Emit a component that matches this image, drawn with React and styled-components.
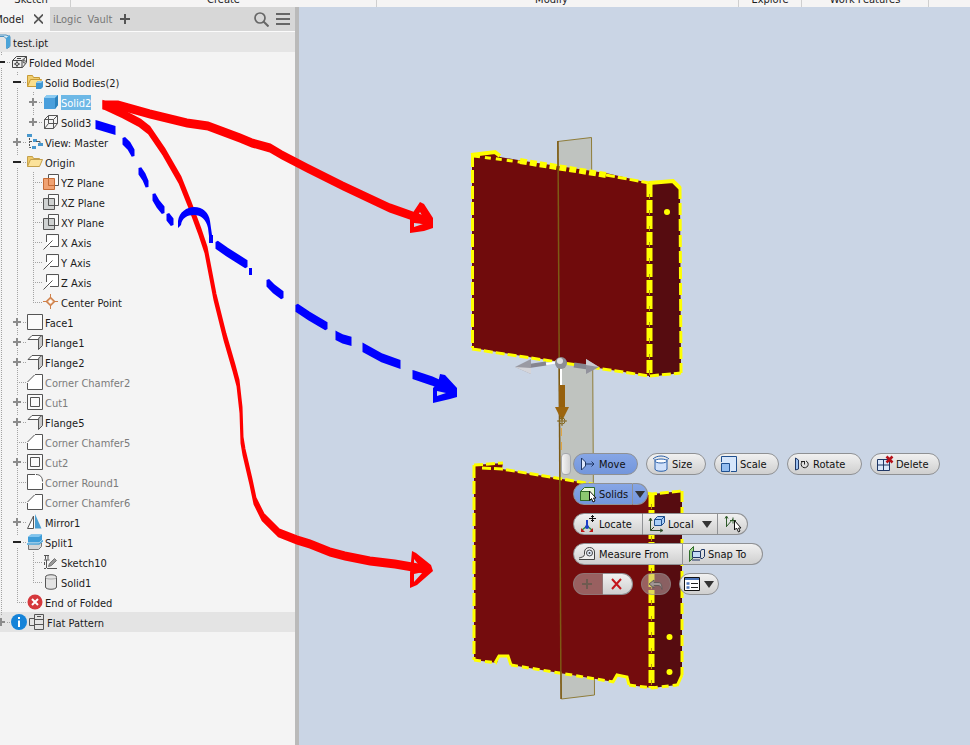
import React from 'react';
import styled, { createGlobalStyle, css } from 'styled-components';

const GlobalStyle = createGlobalStyle`
    * {
        box-sizing: border-box;
    }
    body {
        margin: 0;
        background: #cad5e5;
        font-family: "DejaVu Sans Condensed", "DejaVu Sans", Tahoma, sans-serif;
        font-size: 11px;
        color: #1c1c1c;
    }
    button {
        font: inherit;
        color: inherit;
        padding: 0;
        border: 0;
        background: none;
    }
    svg {
        display: block;
        flex: none;
    }
`

const Page = styled.div`
    position: relative;
    display: flex;
    flex-direction: column;
    min-height: 100vh;
    overflow: hidden;
`

/* ---------- ribbon ---------- */

const Ribbon = styled.header`
    display: grid;
    grid-template-columns: 71fr 306fr 362fr 63fr 127fr 41fr;
    grid-template-rows: 7px;
    align-items: end;
    background: #f5f4f4;
    overflow: hidden;
`

const RibbonGroup = styled.div`
    min-width: 0;
    line-height: 14px;
    height: 14px;
    text-align: center;
    border-right: 1px solid #cfcfcf;
    padding-right: ${p => p.$inset || 0}px;
    white-space: nowrap;
    &:last-child {
        border-right: 0;
    }
`

/* ---------- browser panel ---------- */

const Workspace = styled.div`
    display: flex;
    flex: 1;
`

const Panel = styled.aside`
    flex: none;
    width: 299px;
    border-right: 4px solid #bababa;
    background: #f4f4f4;
    overflow: hidden;
`

const TabBar = styled.div`
    display: flex;
    align-items: stretch;
    height: 24px;
    background: #d7d7d7;
    padding-right: 5px;
`

const ModelTab = styled.div`
    display: flex;
    align-items: center;
    justify-content: flex-end;
    gap: 10px;
    width: 50px;
    padding-right: 7px;
    background: #f4f4f4;
`

const Tab = styled.button`
    margin: 0 3px;
    color: #777;
`

const IconButton = styled.button`
    display: flex;
    align-items: center;
`

const TabTools = styled.div`
    display: flex;
    gap: 7px;
    margin-left: auto;
`

const FileRow = styled.div`
    display: flex;
    align-items: center;
    height: 21px;
    margin-left: -5px;
    border-top: 1px solid #fbfbfb;
    background: #e5e5e5;
`

const Tree = styled.ul`
    list-style: none;
    margin: 0;
    padding: 0;
`

const TreeRow = styled.li`
    display: flex;
    align-items: center;
    height: 20px;
    padding-right: 4px;
    background: ${p => (p.$shaded ? '#e4e4e4' : 'transparent')};
`

const TreeInner = styled.div`
    display: flex;
    align-items: center;
    height: 20px;
    margin-left: -5px;
`

const dots = dir => `repeating-linear-gradient(${dir}, #a3a3a3 0 1px, transparent 1px 2px)`

const guides = {
    line: css`
        background: ${dots('to bottom')} 6px 0 / 1px 20px no-repeat;
    `,
    tee: css`
        background:
            ${dots('to bottom')} 6px 0 / 1px 20px no-repeat,
            ${dots('to right')} 6px 10px / 10px 1px no-repeat;
    `,
    end: css`
        background:
            ${dots('to bottom')} 6px 0 / 1px 10px no-repeat,
            ${dots('to right')} 6px 10px / 10px 1px no-repeat;
    `,
}

const Guide = styled.span`
    display: flex;
    align-items: center;
    flex: none;
    width: 16px;
    height: 20px;
    ${p => guides[p.$kind]}
`

const Expander = styled.button`
    width: 12px;
    height: 12px;
    background:
        linear-gradient(${p => (p.$open ? '#222, #222' : '#8b8b8b, #8b8b8b')}) 2px 5px / 8px 2px no-repeat,
        linear-gradient(${p => (p.$open ? 'transparent, transparent' : '#8b8b8b, #8b8b8b')}) 5px 2px / 2px 8px no-repeat,
        ${p => (p.$shaded ? '#e4e4e4' : '#f4f4f4')};
`

const Label = styled.span`
    margin-left: 2px;
    padding-top: 2px;
    line-height: 13px;
    white-space: nowrap;
    color: ${p => (p.$muted ? '#7b7b7b' : '#1c1c1c')};
    ${p => p.$selected && css`
        background: #6db8e6;
        color: #fff;
    `}
`

/* ---------- viewport ---------- */

const Viewport = styled.main`
    position: relative;
    flex: 1;
    overflow: hidden;
    background: #cad5e5;
`

const MiniToolbar = styled.div`
    position: absolute;
    left: 262px;
    top: 446px;
    display: flex;
    align-items: flex-start;
    gap: 2px;
`

const Grip = styled.div`
    width: 10px;
    height: 22px;
    border: 1px solid #a5a8ad;
    border-radius: 4px;
    background: linear-gradient(90deg, #f4f4f4, #d2d2d2);
`

const ToolRows = styled.div`
    display: flex;
    flex-direction: column;
    gap: 8px;
`

const ToolRow = styled.div`
    display: flex;
    gap: 8px;
`

const ToolGroup = styled.div`
    display: flex;
    & > button:not(:first-child) {
        border-left: 0;
        border-top-left-radius: 0;
        border-bottom-left-radius: 0;
    }
    & > button:not(:last-child) {
        border-top-right-radius: 0;
        border-bottom-right-radius: 0;
    }
`

const fills = {
    plain: 'linear-gradient(#f1f1f1, #dedede 55%, #cfcfcf)',
    active: 'linear-gradient(#86a6e6, #7396dc)',
    faded: 'rgba(190, 180, 180, 0.5)',
}

const ToolButton = styled.button`
    display: flex;
    align-items: center;
    gap: 2px;
    width: ${p => p.$width}px;
    height: 22px;
    padding-left: ${p => (p.$center ? 0 : 5)}px;
    justify-content: ${p => (p.$center ? 'center' : 'flex-start')};
    border: 1px solid ${p => (p.$look === 'faded' ? 'rgba(140, 130, 130, 0.6)' : '#8f9194')};
    border-radius: 11px;
    background: ${p => fills[p.$look || 'plain']};
    color: #111;
    white-space: nowrap;
`

const Caret = styled.span`
    border: 5px solid transparent;
    border-top: 7px solid #333;
    border-bottom: 0;
    margin-left: ${p => p.$gap || 0}px;
`

const Markup = styled.svg`
    position: absolute;
    left: 0;
    top: 0;
    pointer-events: none;
`

/* ---------- icons ---------- */

const Svg = ({ size = 16, children }) => (
    <svg width={size} height={size} viewBox={`0 0 ${size} ${size}`} fill="none" aria-hidden="true">{children}</svg>
)

const PlaneIcon = ({ fill, stroke }) => (
    <Svg>
        <path d="M5.500.5h10v11h-10z" fill="#fbfbfb" stroke="#555" />
        <path d="M.5 4.500h11v11H.5z" fill={fill} stroke={stroke} />
        <path d="M5.500 4.500v7h6" stroke={stroke} />
    </Svg>
)

const icons = {
    part: (
        <Svg>
            <path d="M0 2.500h9l3 3v9l3-2v-10l-4-1.500H2z" fill="#d8edf8" stroke="#4a90bf" />
            <path d="M11 4l4-3v11l-4 3z" fill="#4aa3d8" />
        </Svg>
    ),
    folded: (
        <Svg>
            <path d="M1.500 6.500l4-4h10v6l-4 5h-10z" fill="#eee" stroke="#444" />
            <path d="M1.500 6.500h9.500v7M11 6.500l4.500-4" stroke="#444" />
            <circle cx="6" cy="10" r="1.500" stroke="#444" />
            <path d="M6 7v2M6 11v2M3 10h1.500M7.500 10H9" stroke="#444" />
            <ellipse cx="13.200" cy="7.500" rx="1" ry="1.600" stroke="#444" />
            <path d="M6 4.500h4" stroke="#444" />
        </Svg>
    ),
    bodies: (
        <Svg>
            <path d="M.5 12.500V1.500h5l1 2h6v2" fill="#f0cf70" stroke="#c79a35" />
            <path d="M.5 12.500l3-7h11l-3 7z" fill="#fadf8e" stroke="#c79a35" />
            <path d="M9 9l2-2h5v6l-2 2H9z" fill="#3f97d3" />
            <path d="M9 9l2-2h5l-2 2z" fill="#8cc8ee" />
        </Svg>
    ),
    solid: (
        <Svg>
            <path d="M1 4l3-3h11v10l-3 4H1z" fill="#4a9fdc" />
            <path d="M1 4l3-3h11l-3 3z" fill="#8bcbf2" />
            <path d="M12 4l3-3v10l-3 4z" fill="#2b82bd" />
        </Svg>
    ),
    wire: (
        <Svg>
            <path d="M1.500 5.500l4-4h9v8l-4 5h-9zM1.500 5.500h9v9M10.500 5.500l4-4M5.500 1.500v8h9M5.500 9.500l-4 5" stroke="#555" />
        </Svg>
    ),
    view: (
        <Svg>
            <path d="M2.500 4v9.500H6M3 7.500h4" stroke="#555" strokeDasharray="2 1" />
            <path d="M0 0h5v3H0zM6 5h4v3H6zM11 9h5v3h-5zM5 12h4v3H5z" fill="#4797cd" />
            <path d="M9 7.500h4V9" stroke="#555" />
        </Svg>
    ),
    folder: (
        <Svg>
            <path d="M.5 12.500V2.500h5l1 2h6v2" fill="#efcb6a" stroke="#c4a04c" />
            <path d="M.5 12.500l3-7h12l-3 7z" fill="#fbe29a" stroke="#c4a04c" />
        </Svg>
    ),
    planeYZ: <PlaneIcon fill="#f0a272" stroke="#c56b35" />,
    plane: <PlaneIcon fill="#cfd2d2" stroke="#555" />,
    axis: (
        <Svg>
            <path d="M3.500 1.500h12v11h-12z" fill="#fff" />
            <path d="M3.500 8V.5h12v12H7M.5 15.500l9-9" stroke="#555" />
        </Svg>
    ),
    center: (
        <Svg>
            <path d="M7.500 0v15M0 7.500h15" stroke="#cf8049" />
            <path d="M7.500 3.500l4 4-4 4-4-4z" fill="#f4d5bd" stroke="#cf8049" strokeWidth="1.500" />
            <circle cx="7.500" cy="7.500" r="1.500" fill="#fff" />
        </Svg>
    ),
    face: <Svg><path d="M.5.5h15v15H.5z" fill="#fafafa" stroke="#555" /></Svg>,
    flange: (
        <Svg>
            <path d="M1 5.500L5 1.500h10l-4 4z" fill="#fff" stroke="#555" />
            <path d="M11.500 6c0-2.500 1.500-4 4-4.500v10l-4 4z" fill="#c9c9c9" stroke="#555" />
        </Svg>
    ),
    chamfer: (
        <Svg>
            <path d="M.5 15.500v-7l8-8h7v15z" fill="#fff" />
            <path d="M.5 9v6.500h15V.5H8M.5 8l7-7" stroke="#555" />
        </Svg>
    ),
    round: (
        <Svg>
            <path d="M.5.5H9c4 0 6.500 3 6.500 7v8H.5z" fill="#fff" />
            <path d="M8 .5H.5v15h15V9M9 .5c4 0 6.500 2.500 6.500 7" stroke="#555" />
        </Svg>
    ),
    cut: <Svg><path d="M.5.5h15v15H.5zM3.500 3.500h9v9h-9z" fill="#fbfbfb" stroke="#555" /></Svg>,
    mirror: (
        <Svg>
            <path d="M6.500 2v12.500h-6z" fill="#fff" stroke="#555" />
            <path d="M8 0l6.500 14.500H8z" fill="#4a9fd3" />
        </Svg>
    ),
    split: (
        <Svg>
            <path d="M1.500 11v4.500h10l3-3V9" fill="#d6d6d6" stroke="#777" />
            <path d="M1 3l3-2.500h11V6l-3 2.500H1z" fill="#3f9dd8" />
            <path d="M1 3l3-2.500h11L12 3z" fill="#7fc4ee" />
            <path d="M0 10h12l4-3.500" stroke="#4aa3d8" strokeWidth="1.500" />
        </Svg>
    ),
    sketch: (
        <Svg>
            <path d="M1 1.500h5M2.500 2v3.500M5 2v3.500M1 6h5.500M3.500 6v8M1.500 8v3" stroke="#555" />
            <path d="M1 14.500h14" stroke="#555" strokeDasharray="2 1 10 1" />
            <path d="M5.500 12.500l1-3 5-5 2 2-5 5z" fill="#999" stroke="#777" />
        </Svg>
    ),
    cylinder: (
        <Svg>
            <path d="M2.500 3v10c0 3 11 3 11 0V3c0-3-11-3-11 0z" fill="#e3e3e3" stroke="#555" />
            <path d="M2.500 3.500c0 2 11 2 11 0" stroke="#aaa" />
        </Svg>
    ),
    endFolded: (
        <Svg>
            <circle cx="8" cy="8" r="7.500" fill="#d5383c" />
            <path d="M5 5l6 6M11 5l-6 6" stroke="#fff" strokeWidth="2" />
        </Svg>
    ),
    info: (
        <Svg>
            <circle cx="8" cy="8" r="8" fill="#1583d8" />
            <path d="M8 3v2M8 6.500V13" stroke="#fff" strokeWidth="2" />
        </Svg>
    ),
    flat: (
        <Svg>
            <path d="M5.500.5h9v15h-9zM5.500 5.500h9M5.500 10.500h9M5.500 4.500h-5v7h5M8 2.500h4" stroke="#555" />
        </Svg>
    ),
}

const toolIcons = {
    move: (
        <Svg size={18}>
            <path d="M2.500 3v12l4-4V7z" fill="#dfe8fb" stroke="#1f3765" />
            <path d="M6 9h9M12.500 6.500L15 9l-2.500 2.500" stroke="#1f3765" />
        </Svg>
    ),
    size: (
        <Svg size={18}>
            <path d="M3 4v10c0 3 12 3 12 0V4" fill="#cfe0fa" stroke="#2a5fa8" />
            <ellipse cx="9" cy="6" rx="6" ry="2" fill="#fff" stroke="#2a5fa8" />
            <path d="M1 4c4-4 12-4 16 0" stroke="#2a5fa8" />
        </Svg>
    ),
    scale: (
        <Svg size={18}>
            <path d="M1.500 7V1.500h15v15H11" stroke="#1f4f8f" fill="#d6e6fb" />
            <path d="M1.500 8.500h8v8h-8z" fill="#93bdf0" stroke="#1f4f8f" />
        </Svg>
    ),
    rotate: (
        <Svg size={18}>
            <path d="M2.500 3l3 2v9l-3 1z" fill="#9cc0f0" stroke="#1f3765" />
            <path d="M8 6.500h4M11.500 6v3.500M9 7a3.500 3.500 0 1 0 4-1" stroke="#222" />
        </Svg>
    ),
    delete: (
        <Svg size={18}>
            <path d="M1.500 4.500h12v11h-12zM7.500 4.500v11M1.500 10h12" fill="#dbe8fb" stroke="#1f3765" />
            <path d="M10.500 1.500l6 6M16.500 1.500l-6 6" stroke="#b5121b" strokeWidth="2.500" />
        </Svg>
    ),
    solids: (
        <Svg size={18}>
            <path d="M1.500 6.500l4-4h10v9l-4 4h-10z" fill="#e8f6d8" stroke="#2f6b2a" />
            <path d="M1.500 6.500h9v9h-9z" fill="#8cc871" stroke="#2f6b2a" />
            <path d="M10.500 6v9.500l2-2 1.500 3.500 2-1-1.500-3h2.500z" fill="#fff" stroke="#111" />
        </Svg>
    ),
    locate: (
        <Svg size={18}>
            <path d="M13.500 0v7M10 3.500h7M12 1.500h3M12 5.500h3" stroke="#111" />
            <path d="M8 5v7" stroke="#1c3fc7" strokeWidth="2" />
            <path d="M8 11l-5 4M8 11l5 4" stroke="#2c8a3b" strokeWidth="1.500" />
            <path d="M2 13v4h4zM14 13v4h-4z" fill="#c01818" />
            <circle cx="8" cy="12" r="2" fill="#1c3fc7" />
        </Svg>
    ),
    local: (
        <Svg size={18}>
            <path d="M2.500 4v11.500H14M1 6l1.500-3L4 6M12 14l3 1.500-3 1.500M2.500 15.500L6 12" stroke="#2d4a26" />
            <path d="M6.500 4.500l3-3h7v6l-3 3h-7z" fill="#a9cef7" stroke="#1f4f8f" />
            <path d="M6.500 4.500h7v6M13.500 4.500l3-3" stroke="#1f4f8f" />
        </Svg>
    ),
    pick: (
        <Svg size={18}>
            <path d="M2.500 2v10M1 3.500L2.500 1 4 3.500M2.500 11.500L9 4M9 2.500v6M6 5.500h6" stroke="#2f5b2a" />
            <path d="M10.500 5.500V15l2-2 2 4 1.500-1-1.500-3H17z" fill="#fff" stroke="#111" />
        </Svg>
    ),
    measure: (
        <Svg size={18}>
            <path d="M0 14.500h15.500V7c0-6-10-6-10 0v2.500c0 2-3 3-5.500 3.500" fill="#eee" stroke="#444" />
            <circle cx="10.500" cy="8" r="3" fill="#e3edfb" stroke="#444" />
            <circle cx="10.500" cy="8" r="1" fill="#444" />
        </Svg>
    ),
    snap: (
        <Svg size={18}>
            <path d="M1.500 5.500l4-4v11l-4 4z" fill="#9fd28d" stroke="#2f6b2a" />
            <path d="M4.500 6.500h8v6h-8z" fill="#c4dcf8" stroke="#1f3765" />
            <path d="M12.500 6.500l1-2h3v7l-2 2h-2M4 15h8" stroke="#1f3765" />
        </Svg>
    ),
    add: <Svg size={18}><path d="M8 4v10M3 9h10" stroke="#6f5a50" strokeWidth="2" /></Svg>,
    cancel: <Svg size={18}><path d="M3 4l9 10M12 4L3 14" stroke="#c4161c" strokeWidth="2" /></Svg>,
    undo: <Svg size={18}><path d="M2 9l5-4v2.500h4c3 0 4 1.500 4 7-1-3-2-4-4-4H7V13z" fill="#a19795" stroke="#665c5b" /></Svg>,
    options: (
        <Svg size={18}>
            <path d="M.5 2.500h15v13H.5z" fill="#fff" stroke="#111" />
            <path d="M1 4h14" stroke="#4c74b8" strokeWidth="2" />
            <path d="M2.500 8.500h3M2.500 12.500h3" stroke="#4c74b8" strokeWidth="2.500" />
            <path d="M7 8.500h7M7 12.500h7" stroke="#222" />
        </Svg>
    ),
}

/* ---------- tree data ---------- */

// guides: one entry per column, the last one belongs to the row itself
const rows = [
    { label: 'Folded Model', icon: 'folded', guides: ['tee'], open: true },
    { label: 'Solid Bodies(2)', icon: 'bodies', guides: ['line', 'tee'], open: true },
    { label: 'Solid2', icon: 'solid', guides: ['line', 'line', 'tee'], open: false, selected: true },
    { label: 'Solid3', icon: 'wire', guides: ['line', 'line', 'end'], open: false },
    { label: 'View: Master', icon: 'view', guides: ['line', 'tee'], open: false },
    { label: 'Origin', icon: 'folder', guides: ['line', 'tee'], open: true },
    { label: 'YZ Plane', icon: 'planeYZ', guides: ['line', 'line', 'tee'] },
    { label: 'XZ Plane', icon: 'plane', guides: ['line', 'line', 'tee'] },
    { label: 'XY Plane', icon: 'plane', guides: ['line', 'line', 'tee'] },
    { label: 'X Axis', icon: 'axis', guides: ['line', 'line', 'tee'] },
    { label: 'Y Axis', icon: 'axis', guides: ['line', 'line', 'tee'] },
    { label: 'Z Axis', icon: 'axis', guides: ['line', 'line', 'tee'] },
    { label: 'Center Point', icon: 'center', guides: ['line', 'line', 'end'] },
    { label: 'Face1', icon: 'face', guides: ['line', 'tee'], open: false },
    { label: 'Flange1', icon: 'flange', guides: ['line', 'tee'], open: false },
    { label: 'Flange2', icon: 'flange', guides: ['line', 'tee'], open: false },
    { label: 'Corner Chamfer2', icon: 'chamfer', guides: ['line', 'tee'], muted: true },
    { label: 'Cut1', icon: 'cut', guides: ['line', 'tee'], open: false, muted: true },
    { label: 'Flange5', icon: 'flange', guides: ['line', 'tee'], open: false },
    { label: 'Corner Chamfer5', icon: 'chamfer', guides: ['line', 'tee'], muted: true },
    { label: 'Cut2', icon: 'cut', guides: ['line', 'tee'], open: false, muted: true },
    { label: 'Corner Round1', icon: 'round', guides: ['line', 'tee'], muted: true },
    { label: 'Corner Chamfer6', icon: 'chamfer', guides: ['line', 'tee'], muted: true },
    { label: 'Mirror1', icon: 'mirror', guides: ['line', 'tee'], open: false },
    { label: 'Split1', icon: 'split', guides: ['line', 'tee'], open: true },
    { label: 'Sketch10', icon: 'sketch', guides: ['line', 'line', 'tee'] },
    { label: 'Solid1', icon: 'cylinder', guides: ['line', 'line', 'end'] },
    { label: 'End of Folded', icon: 'endFolded', guides: ['line', 'end'] },
    { label: 'Flat Pattern', icon: 'flat', status: 'info', guides: ['end'], open: false, shaded: true },
]

function TreeItem({ row }) {
    const last = row.guides.length - 1
    return (
        <TreeRow $shaded={row.shaded}>
            <TreeInner>
                {row.guides.map((kind, i) => (
                    <Guide key={i} $kind={kind}>
                        {i === last && row.open !== undefined && (
                            <Expander
                                $open={row.open}
                                $shaded={row.shaded}
                                aria-expanded={row.open}
                                aria-label={`Toggle ${row.label}`}
                            />
                        )}
                    </Guide>
                ))}
                {row.status && icons[row.status]}
                {row.status && <Label />}
                {icons[row.icon]}
                <Label $muted={row.muted} $selected={row.selected}>{row.label}</Label>
            </TreeInner>
        </TreeRow>
    )
}

function BrowserPanel() {
    return (
        <Panel>
            <TabBar>
                <ModelTab>
                    <span>Model</span>
                    <IconButton aria-label="Close tab">
                        <svg width="9" height="10" viewBox="0 0 9 10"><path d="M0 .5l9 9M9 .5l-9 9" stroke="#555" strokeWidth="1.700" /></svg>
                    </IconButton>
                </ModelTab>
                <Tab>iLogic</Tab>
                <Tab>Vault</Tab>
                <IconButton aria-label="Add tab">
                    <svg width="18" height="10" viewBox="0 0 18 10"><path d="M9 0v10M4 5h10" stroke="#555" strokeWidth="2" /></svg>
                </IconButton>
                <TabTools>
                    <IconButton aria-label="Search">
                        <svg width="15" height="15" viewBox="0 0 15 15" fill="none">
                            <circle cx="6" cy="6" r="5" stroke="#666" strokeWidth="1.700" />
                            <path d="M9.500 9.500l5 5" stroke="#666" strokeWidth="2" />
                        </svg>
                    </IconButton>
                    <IconButton aria-label="Menu">
                        <svg width="14" height="12" viewBox="0 0 14 12"><path d="M0 1h14M0 6h14M0 11h14" stroke="#666" strokeWidth="2" /></svg>
                    </IconButton>
                </TabTools>
            </TabBar>
            <FileRow>{icons.part}<Label>test.ipt</Label></FileRow>
            <Tree>
                {rows.map(row => <TreeItem key={row.label} row={row} />)}
            </Tree>
        </Panel>
    )
}

/* ---------- model drawing ---------- */

const edge = { fill: 'none', stroke: '#ff0', strokeWidth: 3, strokeDasharray: '9 3' }

function Scene() {
    return (
        <svg width="671" height="738" viewBox="299 7 671 738" role="img" aria-label="Sheet metal part">
            <path d="M557.500 141.500L591.500 137.500L594.500 695L561.500 699z" fill="#bfc3bf" stroke="#8f7d3a" />

            <path d="M472 154L495 151L500 157L524 161L606 173L649 183V376L472 348z" fill="#700b0c" />
            <path d="M649 183L673 181L680 187L681 373L649 377z" fill="#560c10" />
            <path d="M472.500 154V348" {...edge} strokeDasharray="13 3" />
            <path d="M472 349L649 376L681 373" {...edge} />
            <path d="M680 187L681 373" {...edge} strokeDasharray="12 4" />
            <path d="M471 155L495 152L500 156M649 183L673 181L680 188" {...edge} strokeWidth="4" strokeDasharray="none" />
            <path d="M474 156L520 162" {...edge} strokeDasharray="6 5" />
            <path d="M520 161L606 175" {...edge} strokeWidth="6" strokeDasharray="7 3" />
            <path d="M606 175L649 183" {...edge} />
            <path d="M649.500 184V376" {...edge} strokeWidth="6" strokeDasharray="13 3" />
            <circle cx="667" cy="212" r="3" fill="#ff0" />

            <path d="M474 465L503 463L502 469L652 494V688L629 685L627 677L617 675L614 682L511 665L508 656H499L497 663L474 660z" fill="#740c0d" />
            <path d="M652 494L682 491V675L677 685L652 688z" fill="#560c10" />
            <path d="M474 465V660" {...edge} strokeDasharray="13 3" />
            <path d="M474 465L503 463M482 468L502 469L652 494L682 491" {...edge} />
            <path d="M682 491V675" {...edge} strokeDasharray="11 5" />
            <path d="M474 660L497 663M511 665L614 682M629 685L652 688L677 685" {...edge} strokeDasharray="7 4" />
            <path d="M495 663L499 656H508L511 665M613 682L617 675L627 677L629 685M677 686L682 675" {...edge} strokeDasharray="none" />
            <path d="M651.500 494V688" {...edge} strokeWidth="6" strokeDasharray="13 3" />
            <path d="M649.500 184V376M651.500 494V688" stroke="#b89a0a" strokeDasharray="5 11" strokeDashoffset="-10" />
            <circle cx="669.500" cy="637" r="3" fill="#ff0" />
            <circle cx="669.500" cy="672" r="3" fill="#ff0" />

            <path d="M558 141L561 699" stroke="#7d5a14" strokeWidth="1.500" />

            {/* manipulator triad */}
            <path d="M546 364L560 362M561 366V386" stroke="#fff" strokeWidth="2" />
            <path d="M529 366L546 363.500" stroke="#85858f" strokeWidth="4" />
            <path d="M515 367L531 359V374z" fill="#9a9aa3" />
            <path d="M515 367L531 368V374z" fill="#d5d5da" />
            <path d="M574 365L588 367" stroke="#85858f" strokeWidth="5" />
            <path d="M586 359V374L599 367z" fill="#92929c" />
            <path d="M586 359L599 367L586 365z" fill="#cacad0" />
            <circle cx="561" cy="363" r="6" fill="#8c8d95" />
            <circle cx="560" cy="361" r="3" fill="#dcdce0" />
            <path d="M562 385V408" stroke="#96600c" strokeWidth="6" />
            <path d="M555 407H569L562 421z" fill="#9c650e" />
            <circle cx="562" cy="421" r="3" fill="none" stroke="#84671e" />
            <path d="M557 421H567M562 416V426" stroke="#84671e" />
            <path d="M561.500 428V460" stroke="#e0a544" strokeDasharray="8 6" />
        </svg>
    )
}

function Toolbar() {
    return (
        <MiniToolbar role="toolbar" aria-label="Direct edit">
            <Grip />
            <ToolRows>
                <ToolRow>
                    <ToolButton $width={65} $look="active">{toolIcons.move}Move</ToolButton>
                    <ToolButton $width={60}>{toolIcons.size}Size</ToolButton>
                    <ToolButton $width={65}>{toolIcons.scale}Scale</ToolButton>
                    <ToolButton $width={75}>{toolIcons.rotate}Rotate</ToolButton>
                    <ToolButton $width={70}>{toolIcons.delete}Delete</ToolButton>
                </ToolRow>
                <ToolRow>
                    <ToolGroup>
                        <ToolButton $width={60} $look="active">{toolIcons.solids}Solids</ToolButton>
                        <ToolButton $width={15} $look="active" $center aria-label="Selection type"><Caret /></ToolButton>
                    </ToolGroup>
                </ToolRow>
                <ToolRow>
                    <ToolGroup>
                        <ToolButton $width={70}>{toolIcons.locate}Locate</ToolButton>
                        <ToolButton $width={75}>{toolIcons.local}Local<Caret $gap={6} /></ToolButton>
                        <ToolButton $width={30} $center aria-label="Pick axis">{toolIcons.pick}</ToolButton>
                    </ToolGroup>
                </ToolRow>
                <ToolRow>
                    <ToolGroup>
                        <ToolButton $width={110}>{toolIcons.measure}Measure From</ToolButton>
                        <ToolButton $width={80}>{toolIcons.snap}Snap To</ToolButton>
                    </ToolGroup>
                </ToolRow>
                <ToolRow>
                    <ToolGroup>
                        <ToolButton $width={30} $look="faded" $center aria-label="Apply">{toolIcons.add}</ToolButton>
                        <ToolButton $width={30} $center aria-label="Cancel">{toolIcons.cancel}</ToolButton>
                    </ToolGroup>
                    <ToolButton $width={30} $look="faded" $center aria-label="Undo">{toolIcons.undo}</ToolButton>
                    <ToolButton $width={40} $center aria-label="Options">{toolIcons.options}<Caret /></ToolButton>
                </ToolRow>
            </ToolRows>
        </MiniToolbar>
    )
}

/* ---------- pen markup ---------- */

// Flat pen nib: the line is thick when it runs sideways and thin when it drops
function Pen({ points, color, nib = 6 }) {
    const half = nib / 2
    const top = points.map(([x, y]) => `${x} ${y - half}`)
    const bottom = points.map(([x, y]) => `${x} ${y + half}`).reverse()
    return (
        <path
            d={`M${[...top, ...bottom].join('L')}z`}
            fill={color}
            stroke={color}
            strokeWidth="3"
            strokeLinejoin="miter"
            strokeMiterlimit="2"
        />
    )
}

const redLines = [
    [[104, 105], [118, 105], [150, 114], [187, 123], [208, 126], [240, 138], [252, 143], [270, 148], [282, 155], [307, 168], [343, 186], [390, 208], [424, 220]],
    [[104, 105], [123, 114], [140, 123], [149, 130], [164, 152], [180, 180], [190, 205], [200, 232], [206, 250], [215, 297], [225, 337], [234, 368], [238, 383], [241, 410], [242, 440], [244, 452], [251, 482], [255, 501], [263, 517], [279, 533], [297, 540], [310, 544], [330, 552], [345, 556], [370, 561], [395, 564], [424, 569]],
]

const blueLines = [
    [[97, 125], [114, 130]],
    [[124, 141], [129, 146], [133, 153]],
    [[140, 171], [144, 177], [147, 184]],
    [[154, 197], [158, 204], [163, 210]],
    [[168, 217], [172, 222]],
    [[217, 245], [227, 252], [246, 264]],
    [[268, 283], [274, 289], [282, 295]],
    [[297, 308], [309, 316], [326, 326]],
    [[337, 336], [343, 339], [350, 341]],
    [[364, 348], [382, 358], [399, 364]],
    [[414, 375], [432, 381], [450, 389]],
]

function Annotations() {
    return (
        <Markup width="970" height="745" viewBox="0 0 970 745" fill="none" aria-hidden="true">
            {redLines.map((points, i) => <Pen key={i} points={points} color="#f00" />)}
            <g fill="#f00" fillRule="evenodd">
                <path d="M420 202L424 204L433 218V228L424 231L410 233V219L414 211zM420 212L417 217L424 219zM414 223V227L423 224z" />
                <path d="M412 551L416 553L431 565L433 571L417 585L410 588V573zM414 559V565L418 564zM414 574V582L423 572z" />
            </g>
            {blueLines.map((points, i) => <Pen key={i} points={points} color="#00f" />)}
            <path d="M178 228V221C179 212 187 207 194 207C203 207 209 213 210 221L212 235V243H209V236L208 228C206 219 201 215 194 215C187 215 182 218 181 225z" fill="#00f" />
            <path d="M209 235H213V243H209zM249 268H252V275H249z" fill="#00f" />
            <path d="M440 374L445 375L457 388V397L450 399L433 403V388L438 383zM437 391V396L446 393z" fill="#00f" fillRule="evenodd" />
        </Markup>
    )
}

function App() {
    return (
        <Page>
            <GlobalStyle />
            <Ribbon>
                <RibbonGroup $inset={8}>Sketch</RibbonGroup>
                <RibbonGroup>Create</RibbonGroup>
                <RibbonGroup $inset={12}>Modify</RibbonGroup>
                <RibbonGroup>Explore</RibbonGroup>
                <RibbonGroup>Work Features</RibbonGroup>
                <RibbonGroup />
            </Ribbon>
            <Workspace>
                <BrowserPanel />
                <Viewport>
                    <Scene />
                    <Toolbar />
                </Viewport>
            </Workspace>
            <Annotations />
        </Page>
    );
}

export default App;
